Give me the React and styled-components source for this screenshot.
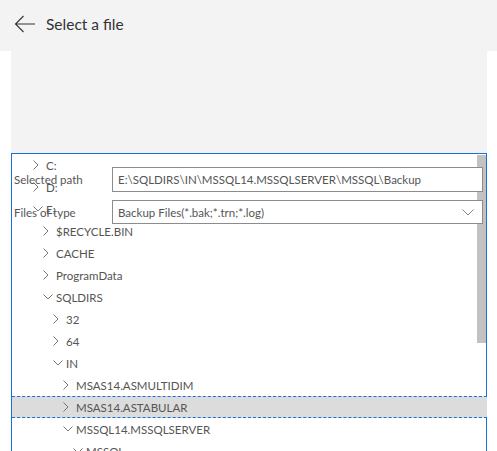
import React from 'react';
import styled, { createGlobalStyle } from 'styled-components';

const GlobalStyle = createGlobalStyle`
  html, body {
    margin: 0;
    padding: 0;
    background: #ffffff;
    font-family: Lato, "Noto Sans", sans-serif;
    overflow: hidden;
  }
`;

const tree = [
  { name: 'C:', level: 0, open: false },
  { name: 'D:', level: 0, open: false },
  { name: 'E:', level: 0, open: true },
  { name: '$RECYCLE.BIN', level: 1, open: false },
  { name: 'CACHE', level: 1, open: false },
  { name: 'ProgramData', level: 1, open: false },
  { name: 'SQLDIRS', level: 1, open: true },
  { name: '32', level: 2, open: false },
  { name: '64', level: 2, open: false },
  { name: 'IN', level: 2, open: true },
  { name: 'MSAS14.ASMULTIDIM', level: 3, open: false },
  { name: 'MSAS14.ASTABULAR', level: 3, open: false, selected: true },
  { name: 'MSSQL14.MSSQLSERVER', level: 3, open: true },
  { name: 'MSSQL', level: 4, open: true },
];

function Chevron({ open }) {
  return open ? (
    <svg width="10" height="6" viewBox="0 0 10 6">
      <path d="M0.5 0.5 L5 5 L9.5 0.5" fill="none" stroke="#666" strokeWidth="0.9" />
    </svg>
  ) : (
    <svg width="6" height="10" viewBox="0 0 6 10">
      <path d="M0.5 0.5 L5 5 L0.5 9.5" fill="none" stroke="#666" strokeWidth="0.9" />
    </svg>
  );
}

function App() {
  return (
    <Container>
      <GlobalStyle />
      <Header>
        <BackButton>
          <svg width="22" height="18" viewBox="0 0 22 18">
            <path d="M21 9 H1.5 M9.5 1 L1.5 9 L9.5 17" fill="none" stroke="#333" strokeWidth="1.1" />
          </svg>
        </BackButton>
        <Title>Select a file</Title>
      </Header>
      <Body>
        <Spacer />
        <TreePanel>
          <Rows>
            {tree.map((item) => (
              <Row key={item.name} level={item.level} selected={item.selected}>
                <Toggle>
                  <Chevron open={item.open} />
                </Toggle>
                <span>{item.name}</span>
              </Row>
            ))}
          </Rows>
          <Scrollbar>
            <Thumb />
          </Scrollbar>
          <Form>
            <Field>
              <Label>Selected path</Label>
              <Input>E:\SQLDIRS\IN\MSSQL14.MSSQLSERVER\MSSQL\Backup</Input>
            </Field>
            <Field>
              <Label>Files of type</Label>
              <Select>
                <span>Backup Files(*.bak;*.trn;*.log)</span>
                <svg width="12" height="7" viewBox="0 0 12 7">
                  <path d="M0.5 0.5 L6 6 L11.5 0.5" fill="none" stroke="#777" strokeWidth="0.9" />
                </svg>
              </Select>
            </Field>
          </Form>
        </TreePanel>
      </Body>
    </Container>
  );
}

const Container = styled.div`
  width: 497px;
  height: 451px;
  overflow: hidden;
  background: #ffffff;
`;

const Header = styled.div`
  height: 51px;
  background: #f3f3f3;
  display: flex;
  align-items: center;
  padding-left: 14px;
  box-sizing: border-box;
  padding-bottom: 4px;
`;

const BackButton = styled.div`
  width: 22px;
  height: 18px;
  display: flex;
  margin-right: 10px;
`;

const Title = styled.div`
  font-size: 15.5px;
  color: #333;
`;

const Body = styled.div`
  padding: 0 10px 0 11px;
`;

const Spacer = styled.div`
  height: 102px;
  background: #f3f3f3;
`;

const TreePanel = styled.div`
  position: relative;
  border: 1px solid #1a6fdc;
  border-bottom: none;
  height: 320px;
  display: flex;
`;

const Rows = styled.div`
  flex: 1;
  display: flex;
  flex-direction: column;
`;

const Row = styled.div`
  height: 22px;
  flex-shrink: 0;
  display: flex;
  align-items: center;
  box-sizing: border-box;
  padding-left: ${(p) => 21 + p.level * 10}px;
  font-size: 11.5px;
  color: #555;
  background: ${(p) => (p.selected ? '#dcdcdc' : 'transparent')};
  border-top: 1px dashed ${(p) => (p.selected ? '#1a6fdc' : 'transparent')};
  border-bottom: 1px dashed ${(p) => (p.selected ? '#1a6fdc' : 'transparent')};
  margin-right: ${(p) => (p.selected ? '-10px' : '0')};
  position: relative;
  z-index: ${(p) => (p.selected ? 1 : 0)};
`;

const Toggle = styled.span`
  width: 13px;
  display: flex;
  align-items: center;
`;

const Scrollbar = styled.div`
  width: 9px;
  padding-top: 1px;
`;

const Thumb = styled.div`
  height: 188px;
  background: #c2c2c2;
`;

const Form = styled.div`
  position: absolute;
  top: 13px;
  left: 2px;
  right: 3px;
  display: flex;
  flex-direction: column;
  gap: 8px;
  z-index: 2;
`;

const Field = styled.div`
  display: flex;
  align-items: center;
`;

const Label = styled.div`
  width: 98px;
  font-size: 11.5px;
  color: #555;
`;

const Input = styled.div`
  flex: 1;
  height: 25px;
  box-sizing: border-box;
  border: 1px solid #8c8c8c;
  background: #fff;
  display: flex;
  align-items: center;
  padding-left: 5px;
  font-size: 11.5px;
  color: #555;
`;

const Select = styled(Input)`
  height: 24px;
  justify-content: space-between;
  padding-right: 8px;
`;

export default App;
